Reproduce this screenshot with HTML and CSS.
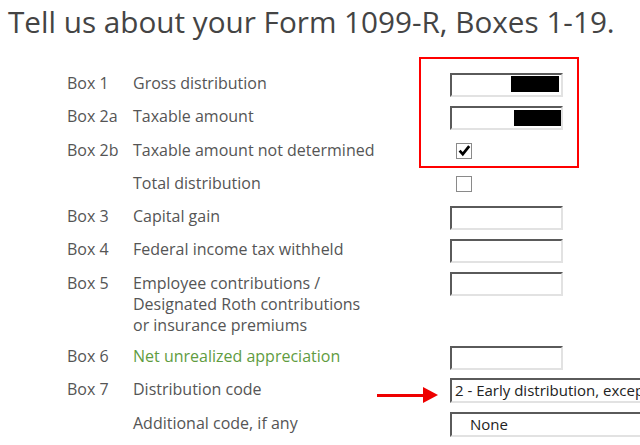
FILE: index.html
```html
<!DOCTYPE html>
<html>
<head>
  <meta charset="UTF-8">
  <title>Form 1099-R</title>
  <link rel="stylesheet" href="styles.css">
</head>
<body>
    <h1 class="title">Tell us about your Form 1099-R, Boxes 1-19.</h1>

    <div class="form">
        <div class="row">
            <span class="box">Box 1</span>
            <span class="desc">Gross distribution</span>
            <div class="field"><input class="amount" type="text"><span class="redact"></span></div>
        </div>
        <div class="row">
            <span class="box">Box 2a</span>
            <span class="desc">Taxable amount</span>
            <div class="field"><input class="amount" type="text"><span class="redact second"></span></div>
        </div>
        <div class="row">
            <span class="box">Box 2b</span>
            <span class="desc">Taxable amount not determined</span>
            <div class="field">
                <span class="check">
                    <svg width="13" height="13" viewBox="0 0 13 13"><path d="M1.6 6.6 L4.8 10.2 L11.2 2.2" fill="none" stroke="#000" stroke-width="2.7"/></svg>
                </span>
            </div>
        </div>
        <div class="row">
            <span class="box"></span>
            <span class="desc">Total distribution</span>
            <div class="field"><span class="check"></span></div>
        </div>
        <div class="row">
            <span class="box">Box 3</span>
            <span class="desc">Capital gain</span>
            <div class="field"><input class="amount" type="text"></div>
        </div>
        <div class="row">
            <span class="box">Box 4</span>
            <span class="desc">Federal income tax withheld</span>
            <div class="field"><input class="amount" type="text"></div>
        </div>
        <div class="row">
            <span class="box">Box 5</span>
            <span class="desc">Employee contributions /<br>Designated Roth contributions<br>or insurance premiums</span>
            <div class="field"><input class="amount" type="text"></div>
        </div>
        <div class="row">
            <span class="box">Box 6</span>
            <span class="desc green">Net unrealized appreciation</span>
            <div class="field"><input class="amount" type="text"></div>
        </div>
        <div class="row">
            <span class="box">Box 7</span>
            <span class="desc">Distribution code</span>
            <div class="field"><div class="dropdown">2 - Early distribution, exception applies</div></div>
        </div>
        <div class="row">
            <span class="box"></span>
            <span class="desc">Additional code, if any</span>
            <div class="field"><div class="dropdown indent">None</div></div>
        </div>

        <div class="highlight"></div>
        <div class="arrow"><span class="shaft"></span><span class="head"></span></div>
    </div>
</body>
</html>
```

FILE: styles.css
```css
body {
    font-family: "Open Sans", sans-serif;
    margin: 0;
    padding: 0 8px;
    background-color: #fff;
    color: #555;
    overflow: hidden;
}

.title {
    font-size: 29.7px;
    font-weight: normal;
    color: #444;
    margin: 3px 0 0 0;
    line-height: 38px;
    white-space: nowrap;
}

.form {
    position: relative;
    padding: 31px 0 0 59px;
}

.row {
    display: grid;
    grid-template-columns: 66px 317px 300px;
    align-items: start;
    min-height: 24px;
    margin-bottom: 9.3px;
    font-size: 16px;
}

.box, .desc {
    line-height: 21px;
    padding-top: 1px;
    white-space: nowrap;
}

.green {
    color: #5f9c3f;
}

.field {
    position: relative;
    height: 24px;
}

.amount {
    box-sizing: border-box;
    width: 113px;
    height: 24px;
    margin: 0;
    padding: 0;
    border-top: 2px solid #5a5a5a;
    border-left: 2px solid #5a5a5a;
    border-right: 2px solid #e2e2e2;
    border-bottom: 2px solid #e2e2e2;
    background: #fff;
}

.redact {
    position: absolute;
    left: 61px;
    top: 4px;
    width: 48px;
    height: 16px;
    background: #000;
}

.redact.second {
    left: 64px;
    top: 5px;
    width: 47px;
}

.check {
    box-sizing: border-box;
    display: flex;
    align-items: center;
    justify-content: center;
    width: 16px;
    height: 16px;
    margin: 4px 0 0 6px;
    border: 1px solid #8a8a8a;
    background: #fff;
}

.dropdown {
    box-sizing: border-box;
    width: 300px;
    height: 25px;
    padding: 0 0 0 3px;
    line-height: 21px;
    font-size: 15px;
    color: #222;
    white-space: nowrap;
    overflow: hidden;
    border-top: 2px solid #5a5a5a;
    border-left: 2px solid #5a5a5a;
    border-bottom: 2px solid #e2e2e2;
}

.dropdown.indent {
    padding-left: 18px;
}

.highlight {
    position: absolute;
    left: 411px;
    top: 16px;
    width: 160px;
    height: 111px;
    border: 2px solid #f00;
    box-sizing: border-box;
}

.arrow {
    position: absolute;
    left: 369px;
    top: 346px;
    display: flex;
    align-items: center;
}

.shaft {
    width: 46px;
    height: 3px;
    background: #e00;
}

.head {
    width: 0;
    height: 0;
    border-top: 8px solid transparent;
    border-bottom: 8px solid transparent;
    border-left: 15px solid #e00;
}
```
